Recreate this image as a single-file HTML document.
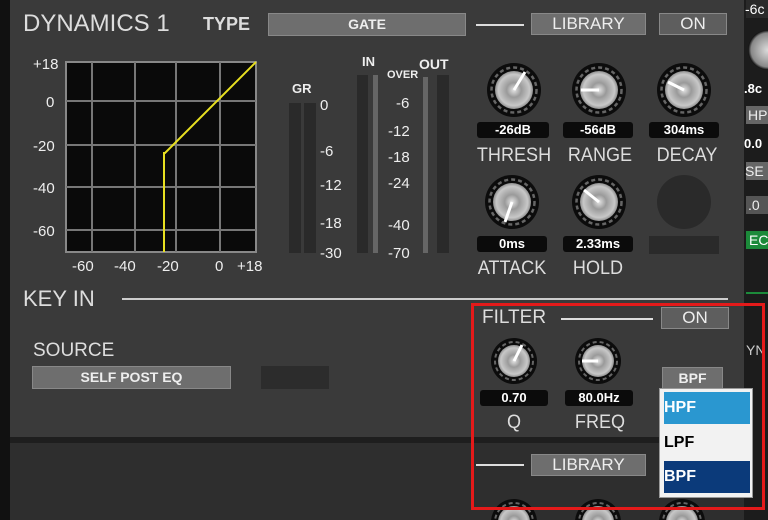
<!DOCTYPE html>
<html><head><meta charset="utf-8"><style>
*{margin:0;padding:0;box-sizing:border-box}
body{width:768px;height:520px;overflow:hidden;background:#1a1a1a;font-family:"Liberation Sans",sans-serif;position:relative}
.a{position:absolute}
.t{position:absolute;color:#e6e6e6;white-space:nowrap;line-height:1}
.btn{position:absolute;background:#6e6e6e;color:#eee;font-weight:bold;text-align:center;border:1px solid #888;}
.val{position:absolute;background:#0b0b0b;color:#fff;font-weight:bold;font-size:13px;text-align:center;border-radius:3px;height:16px;line-height:16px;font-family:"Liberation Sans Narrow","Liberation Sans",sans-serif}
.lbl{position:absolute;color:#ddd;font-size:19px;text-align:center;width:90px;line-height:1;transform:scaleX(.95)}
.sc{position:absolute;color:#eee;font-size:15px;line-height:1;font-family:"Liberation Sans Narrow","Liberation Sans",sans-serif}
</style></head><body>
<div class="a" style="left:10px;top:0;width:734px;height:437px;background:#3a3a3a"></div>
<div class="a" style="left:0;top:0;width:10px;height:520px;background:#111"></div>
<div class="a" style="left:10px;top:437px;width:734px;height:6px;background:#1e1e1e"></div>
<div class="a" style="left:10px;top:443px;width:734px;height:77px;background:#2e2e2e"></div>
<div class="a" style="left:744px;top:0;width:24px;height:520px;background:#1c1c1c"></div>
<div class="a" style="left:746px;top:0;width:22px;height:18px;background:#2a2a2a"></div>
<div class="t" style="left:745px;top:2px;font-size:14px;color:#fff">-6c</div>
<div class="a" style="left:748px;top:30px;width:40px;height:40px;border-radius:50%;background:radial-gradient(#ddd,#888 60%,#111 70%)"></div>
<div class="t" style="left:744px;top:82px;font-size:13px;color:#fff;font-weight:bold">.8c</div>
<div class="a" style="left:746px;top:106px;width:22px;height:18px;background:#666"></div>
<div class="t" style="left:748px;top:108px;font-size:14px;color:#eee">HP</div>
<div class="t" style="left:744px;top:137px;font-size:13px;color:#fff;font-weight:bold">0.0</div>
<div class="a" style="left:746px;top:162px;width:22px;height:18px;background:#666"></div>
<div class="t" style="left:745px;top:164px;font-size:14px;color:#eee">SE</div>
<div class="a" style="left:746px;top:196px;width:22px;height:18px;background:#555"></div>
<div class="t" style="left:748px;top:198px;font-size:14px;color:#eee">.0</div>
<div class="a" style="left:746px;top:231px;width:22px;height:18px;background:#1c8a3a"></div>
<div class="t" style="left:749px;top:233px;font-size:14px;color:#fff">EC</div>
<div class="a" style="left:746px;top:292px;width:22px;height:2px;background:#1c8a3a"></div>
<div class="t" style="left:746px;top:343px;font-size:14px;color:#ccc">YN</div>

<div class="t" style="left:23px;top:12px;font-size:24px;color:#ddd">DYNAMICS 1</div>
<div class="t" style="left:203px;top:15px;font-size:18px;color:#ddd;font-weight:bold">TYPE</div>
<div class="btn" style="left:268px;top:13px;width:198px;height:23px;font-size:14px;line-height:21px">GATE</div>
<div class="a" style="left:476px;top:24px;width:48px;height:2px;background:#ddd"></div>
<div class="btn" style="left:531px;top:13px;width:115px;height:22px;font-size:17px;line-height:20px;font-weight:normal">LIBRARY</div>
<div class="btn" style="left:659px;top:13px;width:68px;height:22px;font-size:17px;line-height:20px;font-weight:normal;background:#5e5e5e">ON</div>

<svg class="a" style="left:0;top:0" width="470" height="290">
<rect x="66" y="62" width="190" height="190" fill="#0a0a0a" stroke="#888" stroke-width="2"/>
<g stroke="#777" stroke-width="2">
<line x1="92" y1="62" x2="92" y2="252"/><line x1="135" y1="62" x2="135" y2="252"/><line x1="176" y1="62" x2="176" y2="252"/><line x1="220" y1="62" x2="220" y2="252"/>
<line x1="66" y1="101" x2="256" y2="101"/><line x1="66" y1="145" x2="256" y2="145"/><line x1="66" y1="187" x2="256" y2="187"/><line x1="66" y1="230" x2="256" y2="230"/>
</g>
<polyline points="256,62 165,153 164,153 164,252" fill="none" stroke="#e8e020" stroke-width="2"/>
<rect x="289" y="103" width="12" height="150" fill="#2a2a2a"/><rect x="304" y="103" width="12" height="150" fill="#2a2a2a"/>
<rect x="357" y="75" width="11" height="178" fill="#2a2a2a"/><rect x="373" y="75" width="5" height="178" fill="#666"/>
<rect x="423" y="77" width="5" height="176" fill="#666"/><rect x="437" y="75" width="12" height="178" fill="#2a2a2a"/>
</svg>
<div class="sc" style="left:33px;top:57px">+18</div>
<div class="sc" style="left:46px;top:95px">0</div>
<div class="sc" style="left:33px;top:139px">-20</div>
<div class="sc" style="left:33px;top:181px">-40</div>
<div class="sc" style="left:33px;top:224px">-60</div>
<div class="sc" style="left:72px;top:259px">-60</div>
<div class="sc" style="left:114px;top:259px">-40</div>
<div class="sc" style="left:157px;top:259px">-20</div>
<div class="sc" style="left:215px;top:259px">0</div>
<div class="sc" style="left:237px;top:259px">+18</div>

<div class="sc" style="left:292px;top:82px;font-size:13px;font-weight:bold">GR</div>
<div class="sc" style="left:320px;top:98px">0</div>
<div class="sc" style="left:320px;top:144px">-6</div>
<div class="sc" style="left:320px;top:178px">-12</div>
<div class="sc" style="left:320px;top:216px">-18</div>
<div class="sc" style="left:320px;top:246px">-30</div>
<div class="sc" style="left:362px;top:55px;font-size:13px;font-weight:bold">IN</div>
<div class="sc" style="left:387px;top:70px;font-size:11px;font-weight:bold">OVER</div>
<div class="sc" style="left:419px;top:57px;font-size:14px;font-weight:bold">OUT</div>
<div class="sc" style="left:396px;top:96px">-6</div>
<div class="sc" style="left:388px;top:124px">-12</div>
<div class="sc" style="left:388px;top:150px">-18</div>
<div class="sc" style="left:388px;top:176px">-24</div>
<div class="sc" style="left:388px;top:218px">-40</div>
<div class="sc" style="left:388px;top:246px">-70</div>

<svg class="a" style="left:0;top:0" width="744" height="520">
<defs>
<radialGradient id="g" cx="50%" cy="50%" r="55%"><stop offset="0" stop-color="#e4e4e4"/><stop offset=".35" stop-color="#9a9a9a"/><stop offset=".75" stop-color="#c8c8c8"/><stop offset="1" stop-color="#707070"/></radialGradient>
<g id="k"><circle r="27" fill="#0c0c0c"/><circle r="22.5" fill="none" stroke="#666" stroke-width="2.5" stroke-dasharray="4 3"/><circle r="19" fill="url(#g)"/></g>
<g id="ks"><circle r="23" fill="#0c0c0c"/><circle r="19" fill="none" stroke="#666" stroke-width="2" stroke-dasharray="4 3"/><circle r="16" fill="url(#g)"/></g>
</defs>
<g transform="translate(514,90)"><use href="#k"/><line x1="0" y1="0" x2="11" y2="-18" stroke="#fff" stroke-width="3"/></g>
<g transform="translate(599,90)"><use href="#k"/><line x1="0" y1="0" x2="-18" y2="0" stroke="#fff" stroke-width="3"/></g>
<g transform="translate(684,90)"><use href="#k"/><line x1="0" y1="0" x2="-16" y2="-8" stroke="#fff" stroke-width="3"/></g>
<g transform="translate(512,202)"><use href="#k"/><line x1="0" y1="0" x2="-7" y2="20" stroke="#fff" stroke-width="3"/></g>
<g transform="translate(599,202)"><use href="#k"/><line x1="0" y1="0" x2="-15" y2="-12" stroke="#fff" stroke-width="3"/></g>
<circle cx="684" cy="202" r="27" fill="#2a2a2a"/>
<g transform="translate(514,361)"><use href="#ks"/><line x1="0" y1="0" x2="8" y2="-16" stroke="#fff" stroke-width="3"/></g>
<g transform="translate(598,361)"><use href="#ks"/><line x1="0" y1="0" x2="-16" y2="0" stroke="#fff" stroke-width="3"/></g>
<g transform="translate(514,522)"><use href="#ks"/></g>
<g transform="translate(598,522)"><use href="#ks"/></g>
<g transform="translate(682,522)"><use href="#ks"/></g>
</svg>
<div class="val" style="left:477px;top:122px;width:72px">-26dB</div>
<div class="val" style="left:563px;top:122px;width:70px">-56dB</div>
<div class="val" style="left:649px;top:122px;width:70px">304ms</div>
<div class="lbl" style="left:469px;top:146px">THRESH</div>
<div class="lbl" style="left:555px;top:146px">RANGE</div>
<div class="lbl" style="left:642px;top:146px">DECAY</div>
<div class="val" style="left:477px;top:236px;width:70px">0ms</div>
<div class="val" style="left:563px;top:236px;width:70px">2.33ms</div>
<div class="a" style="left:649px;top:236px;width:70px;height:18px;background:#2a2a2a"></div>
<div class="lbl" style="left:467px;top:259px">ATTACK</div>
<div class="lbl" style="left:553px;top:259px">HOLD</div>

<div class="t" style="left:23px;top:288px;font-size:22px;color:#ddd">KEY IN</div>
<div class="a" style="left:122px;top:298px;width:606px;height:2px;background:#ccc"></div>
<div class="t" style="left:33px;top:341px;font-size:19px;color:#ddd">SOURCE</div>
<div class="btn" style="left:32px;top:366px;width:199px;height:23px;font-size:14px;line-height:21px">SELF POST EQ</div>
<div class="a" style="left:261px;top:366px;width:68px;height:23px;background:#2c2c2c"></div>

<div class="t" style="left:482px;top:308px;font-size:19px;color:#ddd">FILTER</div>
<div class="a" style="left:561px;top:318px;width:92px;height:2px;background:#ddd"></div>
<div class="btn" style="left:661px;top:307px;width:68px;height:22px;font-size:17px;line-height:20px;font-weight:normal;background:#5e5e5e">ON</div>
<div class="val" style="left:480px;top:390px;width:68px">0.70</div>
<div class="val" style="left:565px;top:390px;width:68px">80.0Hz</div>
<div class="lbl" style="left:469px;top:413px">Q</div>
<div class="lbl" style="left:555px;top:413px">FREQ</div>
<div class="btn" style="left:662px;top:367px;width:61px;height:23px;font-size:14px;line-height:21px">BPF</div>

<div class="a" style="left:476px;top:464px;width:48px;height:2px;background:#ddd"></div>
<div class="btn" style="left:531px;top:454px;width:115px;height:22px;font-size:17px;line-height:20px;font-weight:normal">LIBRARY</div>

<div class="a" style="left:659px;top:388px;width:94px;height:110px;background:#f2f2f2;border:1px solid #999"></div>
<div class="a" style="left:664px;top:392px;width:86px;height:32px;background:#2a97d0;color:#fff;font-weight:bold;font-size:16px;line-height:32px">HPF</div>
<div class="a" style="left:664px;top:428px;width:86px;height:30px;color:#000;font-weight:bold;font-size:16px;line-height:30px">LPF</div>
<div class="a" style="left:664px;top:461px;width:86px;height:32px;background:#0b3a7a;color:#fff;font-weight:bold;font-size:16px;line-height:32px">BPF</div>

<div class="a" style="left:471px;top:303px;width:294px;height:207px;border:3px solid #e41a1a"></div>
</body></html>
